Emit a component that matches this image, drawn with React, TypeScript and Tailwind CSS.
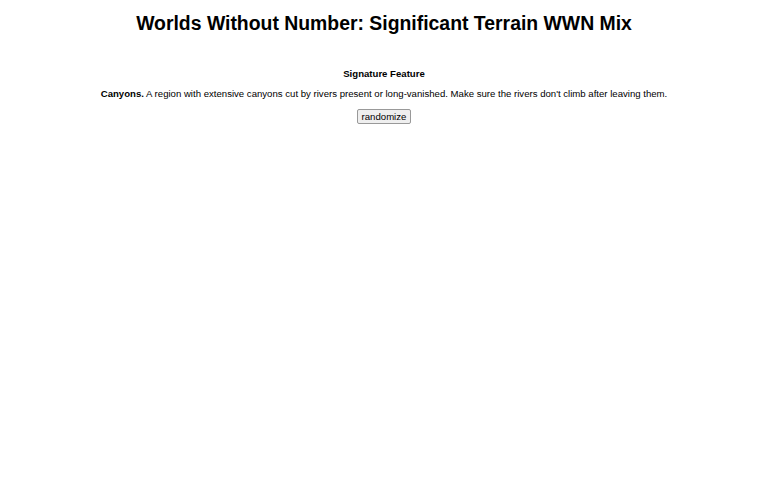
import React, { useState } from "react";

const features = [
  {
    name: "Canyons",
    text: "A region with extensive canyons cut by rivers present or long-vanished. Make sure the rivers don't climb after leaving them.",
  },
];

export default function App() {
  const [idx, setIdx] = useState(0);
  const f = features[idx];

  return (
    <div className="min-h-[480px] bg-white text-black font-['Liberation_Sans',Arial,sans-serif] text-center">
      <h1 className="pt-[11px] text-[19.4px] font-bold leading-[24px]">
        Worlds Without Number: Significant Terrain WWN Mix
      </h1>
      <h2 className="mt-[33px] text-[9.6px] font-bold leading-[12px]">Signature Feature</h2>
      <p className="mt-[8px] text-[9.6px] leading-[12px]">
        <b>{f.name}.</b> {f.text}
      </p>
      <button
        onClick={() => setIdx(Math.floor(Math.random() * features.length))}
        className="mt-[9px] px-[4px] h-[15px] text-[9.6px] leading-[12px] border border-[#999] rounded-[2px] bg-[#efefef]"
      >
        randomize
      </button>
    </div>
  );
}
